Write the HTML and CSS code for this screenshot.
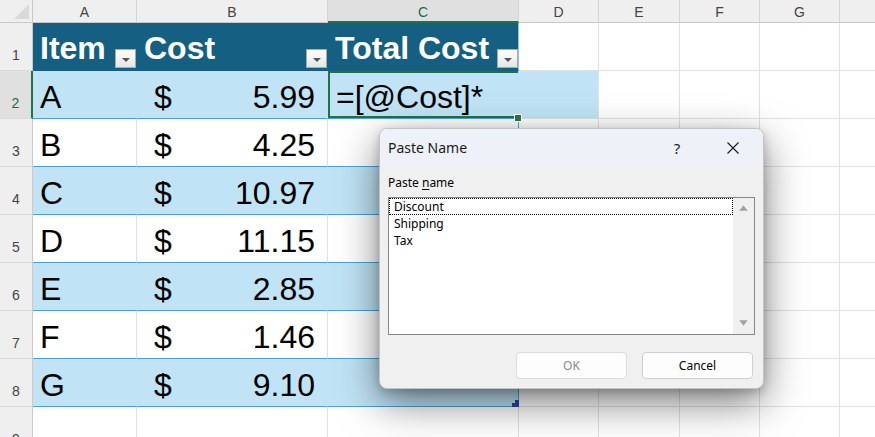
FILE: index.html
```html
<!DOCTYPE html>
<html>
<head>
<meta charset="utf-8">
<title>Paste Name</title>
<link rel="stylesheet" href="styles.css">
</head>
<body>
<div class="sheet">
  <div class="corner"></div>
  <div class="ch">A</div>
  <div class="ch">B</div>
  <div class="ch sel">C</div>
  <div class="ch">D</div>
  <div class="ch">E</div>
  <div class="ch">F</div>
  <div class="ch">G</div>
  <div class="ch"></div>

  <div class="rh">1</div>
  <div class="c th">Item<span class="fb"><span class="tri"></span></span></div>
  <div class="c th">Cost<span class="fb"><span class="tri"></span></span></div>
  <div class="c th last">Total Cost<span class="fb"><span class="tri"></span></span></div>
  <div class="c"></div><div class="c"></div><div class="c"></div><div class="c"></div><div class="c"></div>

  <div class="rh sel">2</div>
  <div class="c band">A</div>
  <div class="c band money"><span>$</span><span>5.99</span></div>
  <div class="c band last editing">=[@Cost]*</div>
  <div class="c editext"></div><div class="c"></div><div class="c"></div><div class="c"></div><div class="c"></div>

  <div class="rh">3</div>
  <div class="c plain">B</div>
  <div class="c plain money"><span>$</span><span>4.25</span></div>
  <div class="c plain last"></div>
  <div class="c"></div><div class="c"></div><div class="c"></div><div class="c"></div><div class="c"></div>

  <div class="rh">4</div>
  <div class="c band">C</div>
  <div class="c band money"><span>$</span><span>10.97</span></div>
  <div class="c band last"></div>
  <div class="c"></div><div class="c"></div><div class="c"></div><div class="c"></div><div class="c"></div>

  <div class="rh">5</div>
  <div class="c plain">D</div>
  <div class="c plain money"><span>$</span><span>11.15</span></div>
  <div class="c plain last"></div>
  <div class="c"></div><div class="c"></div><div class="c"></div><div class="c"></div><div class="c"></div>

  <div class="rh">6</div>
  <div class="c band">E</div>
  <div class="c band money"><span>$</span><span>2.85</span></div>
  <div class="c band last"></div>
  <div class="c"></div><div class="c"></div><div class="c"></div><div class="c"></div><div class="c"></div>

  <div class="rh">7</div>
  <div class="c plain">F</div>
  <div class="c plain money"><span>$</span><span>1.46</span></div>
  <div class="c plain last"></div>
  <div class="c"></div><div class="c"></div><div class="c"></div><div class="c"></div><div class="c"></div>

  <div class="rh">8</div>
  <div class="c band">G</div>
  <div class="c band money"><span>$</span><span>9.10</span></div>
  <div class="c band last endcell">
    <svg class="resize" width="7" height="7" viewBox="0 0 7 7"><path d="M3 0H7V7H0V3H3Z" fill="#2f4896"/></svg>
  </div>
  <div class="c"></div><div class="c"></div><div class="c"></div><div class="c"></div><div class="c"></div>

  <div class="rh">9</div>
  <div class="c"></div><div class="c"></div><div class="c"></div><div class="c"></div><div class="c"></div><div class="c"></div><div class="c"></div><div class="c"></div>
</div>

<div class="dialog">
  <div class="dtitle">
    <span class="dt">Paste Name</span>
    <span class="help">?</span>
    <svg class="close" width="12" height="12" viewBox="0 0 12 12"><path d="M0.5 0.5L11.5 11.5M11.5 0.5L0.5 11.5" stroke="#1a1a1a" stroke-width="1.1" fill="none"/></svg>
  </div>
  <div class="dbody">
    <div class="lbl">Paste <u>n</u>ame</div>
    <div class="list">
      <div class="items">
        <div class="it focus">Discount</div>
        <div class="it">Shipping</div>
        <div class="it">Tax</div>
      </div>
      <div class="sb">
        <svg width="9" height="6" viewBox="0 0 9 6"><path d="M4.5 0.3L8.8 5.7H0.2Z" fill="#a3a3a3"/></svg>
        <svg width="9" height="6" viewBox="0 0 9 6"><path d="M0.2 0.3H8.8L4.5 5.7Z" fill="#a3a3a3"/></svg>
      </div>
    </div>
    <div class="btns">
      <button class="btn dis">OK</button>
      <button class="btn">Cancel</button>
    </div>
  </div>
</div>
</body>
</html>
```

FILE: styles.css
```css
* { box-sizing: border-box; }
html, body { margin: 0; padding: 0; }
body {
  width: 875px;
  height: 437px;
  overflow: hidden;
  background: #ffffff;
  font-family: "Liberation Sans", Arial, sans-serif;
  position: relative;
}

.sheet {
  display: grid;
  grid-template-columns: 33px 104px 191px 191px 80px 81px 80px 80px 80px;
  grid-template-rows: 23px repeat(9, 48px);
}

.corner {
  background: #efefef;
  border-right: 1px solid #c9c9c9;
  border-bottom: 1px solid #c9c9c9;
  display: flex;
  align-items: flex-end;
  justify-content: flex-end;
  padding: 0 3px 3px 0;
}
.corner::after {
  content: "";
  width: 15px;
  height: 15px;
  background: #d9d9d9;
  clip-path: polygon(100% 0, 100% 100%, 0 100%);
}

.ch {
  background: #efefef;
  border-right: 1px solid #d4d4d4;
  border-bottom: 1px solid #c9c9c9;
  color: #444444;
  font-size: 14px;
  text-align: center;
  line-height: 22px;
  padding-top: 1px;
}
.ch.sel {
  background: #e0e0e0;
  color: #1e6b41;
  border-bottom: 2px solid #217346;
}

.rh {
  background: #efefef;
  border-right: 1px solid #c9c9c9;
  border-bottom: 1px solid #dadada;
  color: #444444;
  font-size: 14px;
  display: flex;
  align-items: flex-end;
  justify-content: center;
  padding-bottom: 7px;
}
.rh.sel {
  background: #e0e0e0;
  color: #1e6b41;
  border-right: 2px solid #217346;
}

.c {
  border-right: 1px solid #e1e1e1;
  border-bottom: 1px solid #e1e1e1;
  display: flex;
  align-items: flex-end;
  padding: 0 7px 2px 7px;
  font-size: 32px;
  color: #000000;
  white-space: nowrap;
}

.th {
  background: #156082;
  border-right-color: #156082;
  border-bottom-color: #156082;
  color: #ffffff;
  font-weight: bold;
  padding-right: 0;
  padding-bottom: 3px;
}
.th.last { border-right-color: #8cc4e6; }

.fb {
  margin-left: auto;
  margin-bottom: -1px;
  width: 21px;
  height: 19px;
  border: 1px solid #a9a9a9;
  background: linear-gradient(#ffffff, #e6e6e6);
  display: flex;
  align-items: center;
  justify-content: center;
  padding-top: 3px;
}
.tri {
  width: 0;
  height: 0;
  border-left: 4px solid transparent;
  border-right: 4px solid transparent;
  border-top: 4px solid #555555;
}

.band {
  background: #c0e4f5;
  border-right-color: #c0e4f5;
  border-bottom-color: #4ea1d6;
}
.plain {
  border-bottom-color: #4ea1d6;
}
.last { border-right-color: #4ea1d6; }

.money {
  justify-content: space-between;
  padding-left: 17px;
  padding-right: 12px;
}

.editing {
  position: relative;
  border-right-color: #c0e4f5;
  box-shadow: inset 2px 0 0 #217346, inset 0 2px 0 #217346, inset 0 -2px 0 #217346;
  padding-left: 8px;
}
.editing::after {
  content: "";
  position: absolute;
  right: -4px;
  bottom: -4px;
  width: 6px;
  height: 6px;
  background: #217346;
  border: 1px solid #ffffff;
  z-index: 2;
}
.editext {
  background: #c0e4f5;
}

.endcell { position: relative; }
.resize {
  position: absolute;
  right: -1px;
  bottom: -1px;
}

/* dialog */
.dialog {
  position: absolute;
  left: 379px;
  top: 128px;
  width: 385px;
  height: 261px;
  border: 1px solid #c4c4c4;
  border-radius: 8px;
  overflow: hidden;
  background: #f0f0f0;
  box-shadow: 0 14px 40px rgba(0, 0, 0, 0.5), 0 3px 10px rgba(0, 0, 0, 0.2);
  font-family: "Noto Sans", "Liberation Sans", sans-serif;
  color: #000000;
  display: flex;
  flex-direction: column;
}
.dtitle {
  height: 37px;
  background: #eef2f8;
  display: flex;
  align-items: center;
  padding: 0 24px 0 8px;
}
.dt {
  font-size: 14px;
  color: #1a1a1a;
}
.help {
  margin-left: auto;
  width: 20px;
  text-align: center;
  font-size: 15px;
  color: #1a1a1a;
  margin-right: 40px;
}
.close { display: block; }

.dbody {
  flex: 1;
  padding: 9px 8px 9px 8px;
  display: flex;
  flex-direction: column;
}
.lbl {
  font-size: 12px;
  line-height: 16px;
}
.lbl u { text-underline-offset: 2px; }

.list {
  margin-top: 6px;
  height: 138px;
  border: 1px solid #828790;
  background: #ffffff;
  display: flex;
}
.items {
  flex: 1;
  font-size: 12px;
}
.it {
  height: 17px;
  line-height: 15px;
  padding-left: 4px;
  border: 1px solid transparent;
}
.it.focus {
  border: 1px dotted #000000;
}
.sb {
  width: 21px;
  background: #f0f0f0;
  display: flex;
  flex-direction: column;
  align-items: center;
  justify-content: space-between;
  padding: 7px 0 8px 0;
}
.sb svg { display: block; }

.btns {
  margin-top: 17px;
  display: flex;
  justify-content: flex-end;
  gap: 15px;
  padding-right: 2px;
}
.btn {
  width: 111px;
  height: 27px;
  border: 1px solid #d0d0d0;
  border-radius: 4px;
  background: #fdfdfd;
  font-family: "Noto Sans", "Liberation Sans", sans-serif;
  font-size: 12px;
  color: #000000;
  padding: 0;
}
.btn.dis {
  color: #8a8a8a;
  border-color: #dcdcdc;
}
```
